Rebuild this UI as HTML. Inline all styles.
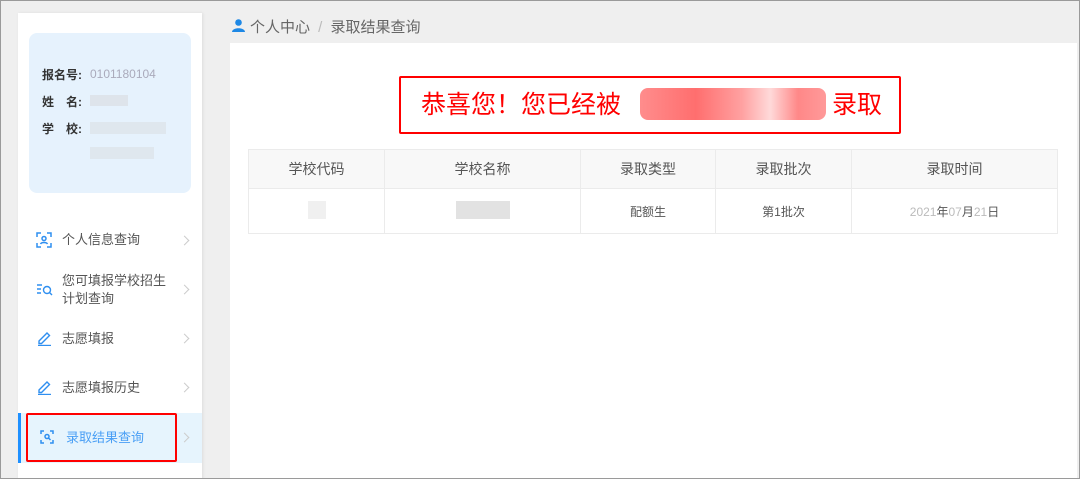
<!DOCTYPE html>
<html><head><meta charset="utf-8"><style>
*{margin:0;padding:0;box-sizing:border-box}
html,body{width:1080px;height:479px;overflow:hidden}
body{background:#efefef;position:relative;font-family:"Liberation Sans","Noto Sans CJK SC",sans-serif}
.abs{position:absolute}
.side{left:18px;top:13px;width:184px;height:470px;background:#fff;box-shadow:1px 0 3px rgba(0,0,0,.08)}
.card{left:29px;top:33px;width:162px;height:160px;background:#e6f2fd;border-radius:8px}
.lab{font-size:12px;font-weight:bold;color:#333}
.blur{background:#d8dbe0}
.mi{left:62px;font-size:13px;color:#555;line-height:18px}
.chev{left:181px;width:7px;height:7px;border-top:1px solid #ccc;border-right:1px solid #ccc;transform:rotate(45deg)}
.main{left:230px;top:43px;width:847px;height:440px;background:#fff}
table{border-collapse:collapse;position:absolute;left:248px;top:149px;width:810px}
td,th{border:1px solid #ebebeb;text-align:center;font-weight:normal}
th{background:#f8f8f8;height:39px;font-size:14px;color:#555}
td{height:45px;font-size:12px;color:#555}
.frame{left:0;top:0;width:1080px;height:479px;border:1px solid #9a9a9a;pointer-events:none}
</style></head><body>
<div class="abs side"></div>
<div class="abs card"></div>
<div class="abs lab" style="left:42px;top:66px">报名号:</div>
<div class="abs" style="left:90px;top:67px;font-size:12px;color:#aab">0101180104</div>
<div class="abs lab" style="left:42px;top:93px">姓　名:</div>
<div class="abs blur" style="left:90px;top:95px;width:38px;height:11px;opacity:.6"></div>
<div class="abs lab" style="left:42px;top:120px">学　校:</div>
<div class="abs blur" style="left:90px;top:122px;width:76px;height:12px;opacity:.5"></div>
<div class="abs blur" style="left:90px;top:147px;width:64px;height:12px;opacity:.5"></div>

<svg class="abs" style="left:36px;top:232px" width="16" height="16" viewBox="0 0 16 16" fill="none" stroke="#2f8ff0" stroke-width="1.5"><path d="M1 5V1h4M11 1h4v4M15 11v4h-4M5 15H1v-4"/><circle cx="8" cy="6.5" r="2"/><path d="M4.5 12c1-2 6-2 7 0"/></svg>
<div class="abs mi" style="top:231px">个人信息查询</div>
<div class="abs chev" style="top:237px"></div>
<svg class="abs" style="left:37px;top:283px" width="16" height="14" viewBox="0 0 16 14" fill="none" stroke="#2f8ff0" stroke-width="1.4"><path d="M0 2h5M0 6h4M0 10h4"/><circle cx="10" cy="7" r="3.5"/><path d="M12.5 9.5L15 12"/></svg>
<div class="abs mi" style="top:272px">您可填报学校招生<br>计划查询</div>
<div class="abs chev" style="top:286px"></div>
<svg class="abs" style="left:37px;top:331px" width="15" height="15" viewBox="0 0 15 15" fill="none" stroke="#2f8ff0" stroke-width="1.4"><path d="M2 10L10 2l2.5 2.5L4.5 12.5H2z"/><path d="M1 14.5h13"/></svg>
<div class="abs mi" style="top:330px">志愿填报</div>
<div class="abs chev" style="top:335px"></div>
<svg class="abs" style="left:37px;top:380px" width="15" height="15" viewBox="0 0 15 15" fill="none" stroke="#2f8ff0" stroke-width="1.4"><path d="M2 10L10 2l2.5 2.5L4.5 12.5H2z"/><path d="M1 14.5h13"/></svg>
<div class="abs mi" style="top:379px">志愿填报历史</div>
<div class="abs chev" style="top:384px"></div>

<div class="abs" style="left:18px;top:413px;width:184px;height:50px;background:#e6f4fd"></div>
<div class="abs" style="left:18px;top:413px;width:3px;height:50px;background:#1e90ff"></div>
<svg class="abs" style="left:40px;top:430px" width="14" height="14" viewBox="0 0 14 14" fill="none" stroke="#2f8ff0" stroke-width="1.5"><path d="M1 4V1h3M10 1h3v3M13 10v3h-3M4 13H1v-3"/><circle cx="7" cy="6.5" r="2"/><path d="M8.5 8l2 2"/></svg>
<div class="abs mi" style="left:66px;top:429px;color:#4a9ff5">录取结果查询</div>
<div class="abs chev" style="top:434px"></div>
<div class="abs" style="left:26px;top:413px;width:151px;height:49px;border:2px solid #f00;border-radius:2px"></div>

<svg class="abs" style="left:232px;top:19px" width="13" height="13" viewBox="0 0 13 13" fill="#1e88e5"><circle cx="6.5" cy="3.5" r="3.3"/><path d="M0 13c0-5 13-5 13 0z"/></svg>
<div class="abs" style="left:250px;top:16px;font-size:15px;color:#666">个人中心 <span style="color:#bbb;margin:0 4px">/</span> 录取结果查询</div>

<div class="abs main"></div>
<div class="abs" style="left:399px;top:76px;width:502px;height:58px;border:2px solid #f00;border-radius:2px"></div>
<div class="abs" style="left:421px;top:89px;font-size:25px;color:#f00;line-height:32px">恭喜您！您已经被</div>
<div class="abs" style="left:640px;top:88px;width:186px;height:32px;border-radius:8px;background:linear-gradient(90deg,#ff7070,#ff4a4a 30%,#ff8a8a 55%,#ffd0d0 70%,#ff6a6a 85%,#ff8080);opacity:.8"></div>
<div class="abs" style="left:832px;top:89px;font-size:25px;color:#f00;line-height:32px">录取</div>

<table>
<tr><th style="width:136px">学校代码</th><th style="width:196px">学校名称</th><th style="width:135px">录取类型</th><th style="width:136px">录取批次</th><th>录取时间</th></tr>
<tr><td><span style="display:inline-block;width:18px;height:18px;background:#f0f0f0"></span></td><td><span style="display:inline-block;width:54px;height:18px;background:#e2e2e2"></span></td><td>配额生</td><td>第1批次</td><td><span style="color:#bbb">2021</span>年<span style="color:#bbb">07</span>月<span style="color:#bbb">21</span>日</td></tr>
</table>
<div class="abs frame"></div>
</body></html>
